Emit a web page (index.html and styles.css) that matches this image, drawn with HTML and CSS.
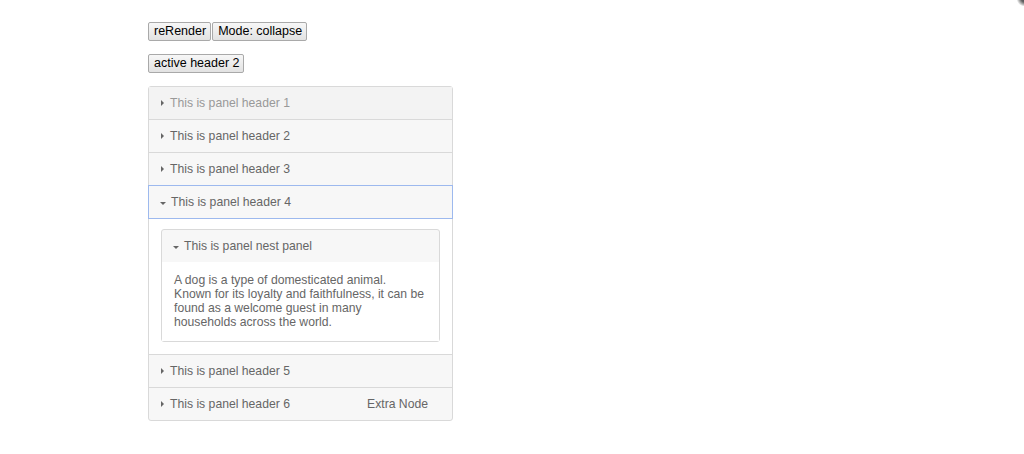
FILE: index.html
```html
<!DOCTYPE html>
<html>
<head>
<meta charset="utf-8">
<link rel="stylesheet" href="styles.css">
</head>
<body>
<div class="corner"></div>
<div class="page">
  <div class="row"><button class="btn">reRender</button><button class="btn">Mode: collapse</button></div>
  <div class="row"><button class="btn">active header 2</button></div>
  <div class="collapse">
    <div class="item disabled">
      <div class="header"><i class="arrow"></i>This is panel header 1</div>
    </div>
    <div class="item">
      <div class="header"><i class="arrow"></i>This is panel header 2</div>
    </div>
    <div class="item">
      <div class="header"><i class="arrow"></i>This is panel header 3</div>
    </div>
    <div class="item active">
      <div class="header focused"><i class="arrow"></i>This is panel header 4</div>
      <div class="content">
        <div class="collapse nested">
          <div class="item active">
            <div class="header"><i class="arrow"></i>This is panel nest panel</div>
            <div class="content text">A dog is a type of domesticated animal. Known for its loyalty and faithfulness, it can be found as a welcome guest in many households across the world.</div>
          </div>
        </div>
      </div>
    </div>
    <div class="item">
      <div class="header"><i class="arrow"></i>This is panel header 5</div>
    </div>
    <div class="item">
      <div class="header"><i class="arrow"></i>This is panel header 6<span class="extra">Extra Node</span></div>
    </div>
  </div>
</div>
</body>
</html>
```

FILE: styles.css
```css
html, body {
  margin: 0;
  padding: 0;
  background: #fff;
  font-family: "Liberation Sans", Arial, sans-serif;
}

.corner {
  position: fixed;
  top: -6px;
  right: -6px;
  width: 14px;
  height: 12px;
  border-radius: 50%;
  background: radial-gradient(circle at 65% 35%, #3a3a48 0%, #666 35%, rgba(255,255,255,0) 72%);
}

.page {
  padding: 22px 0 0 148px;
  display: flex;
  flex-direction: column;
  align-items: flex-start;
  gap: 14px;
}

.row {
  display: flex;
  align-items: flex-start;
  height: 18px;
}

.btn {
  box-sizing: border-box;
  height: 19px;
  font-family: "Liberation Sans", Arial, sans-serif;
  font-size: 12.5px;
  line-height: 15px;
  color: #000;
  padding: 1px 4px 1px 5px;
  margin: 0;
  border: 1px solid #a9a9a9;
  border-radius: 2px;
  background: linear-gradient(#f7f7f7, #e2e2e2);
}

.btn + .btn {
  margin-left: 1px;
}

.collapse {
  width: 303px;
  background: #f7f7f7;
  border: 1px solid #d9d9d9;
  border-radius: 3px;
  font-size: 12.2px;
  color: #666;
}

.item + .item {
  border-top: 1px solid #d9d9d9;
}

.header {
  display: flex;
  align-items: center;
  height: 32px;
  line-height: 32px;
  padding: 0 12px;
  color: #666;
}

.disabled .header {
  color: #999;
  background: #f3f3f3;
}

.focused {
  outline: 1px solid #9db9ee;
}

.arrow {
  display: inline-block;
  width: 0;
  height: 0;
  border-top: 3px solid transparent;
  border-bottom: 3px solid transparent;
  border-left: 3px solid #666;
  margin-right: 6px;
}

.active > .header .arrow {
  border-left: 3px solid transparent;
  border-right: 3px solid transparent;
  border-top: 3px solid #666;
  border-bottom: 0;
  margin-left: -1px;
  margin-right: 5px;
  position: relative;
  top: 1px;
}

.extra {
  margin: 0 12px 0 auto;
}

.content {
  background: #fff;
  padding: 11px 12px 12px;
}

.nested {
  width: auto;
}

.text {
  line-height: 14px;
  padding: 11px 15px 12px 12px;
}
```
